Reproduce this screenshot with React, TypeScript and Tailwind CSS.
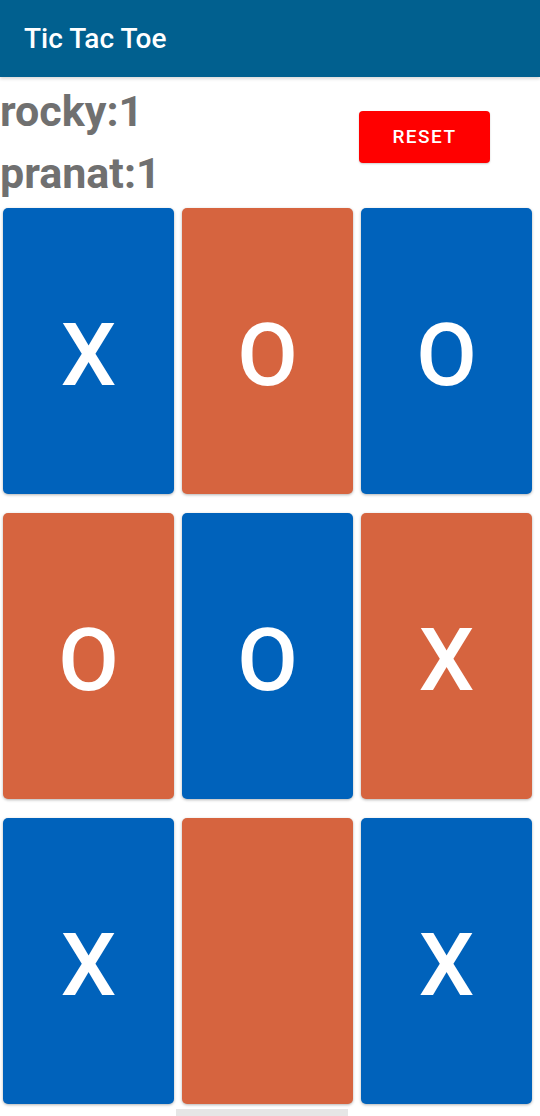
const board: string[] = ['X', 'O', 'O', 'O', 'O', 'X', 'X', '', 'X'];

const players = [
    { name: 'rocky', score: 1 },
    { name: 'pranat', score: 1 },
];

const Cell = ({ value, index }: { value: string; index: number }) => {
    const row = Math.floor(index / 3);
    const col = index % 3;
    const isBlue = (row + col) % 2 === 0;
    return (
        <button
            className={`h-[286px] rounded-[5px] flex items-center justify-center pt-2 text-white text-[88px] font-medium leading-none shadow-[0_1px_3px_rgba(0,0,0,0.3)] ${isBlue ? 'bg-[#0062bb]' : 'bg-[#d6643f]'}`}
        >
            {value}
        </button>
    );
};

export default function App() {
    return (
        <div className="w-[540px] h-[1116px] overflow-hidden bg-white font-['Roboto',sans-serif] flex flex-col">
            <header className="h-[77px] bg-[#01608f] shadow-[0_2px_3px_rgba(0,0,0,0.15)] flex items-center px-6 shrink-0">
                <h1 className="text-white text-[28px] font-medium">Tic Tac Toe</h1>
            </header>

            <div className="flex justify-between pt-[3px]">
                <div>
                    {players.map((p) => (
                        <div key={p.name} className="text-[43px] leading-[62px] font-bold text-[#707070]">
                            {p.name}:{p.score}
                        </div>
                    ))}
                </div>
                <button className="mt-[31px] mr-[50px] w-[131px] h-[52px] self-start rounded-[4px] bg-[#ff0000] text-white text-[19px] font-medium tracking-[1.5px] shadow-[0_1px_2px_rgba(0,0,0,0.2)]">
                    RESET
                </button>
            </div>

            <div className="grid grid-cols-3 gap-x-2 gap-y-[19px] pl-[3px] pr-[8px] pt-1">
                {board.map((v, i) => (
                    <Cell key={i} value={v} index={i} />
                ))}
            </div>

            <div className="mt-[5px] ml-[176px] w-[172px] h-[8px] bg-[#e6e6e6]" />
        </div>
    );
}
